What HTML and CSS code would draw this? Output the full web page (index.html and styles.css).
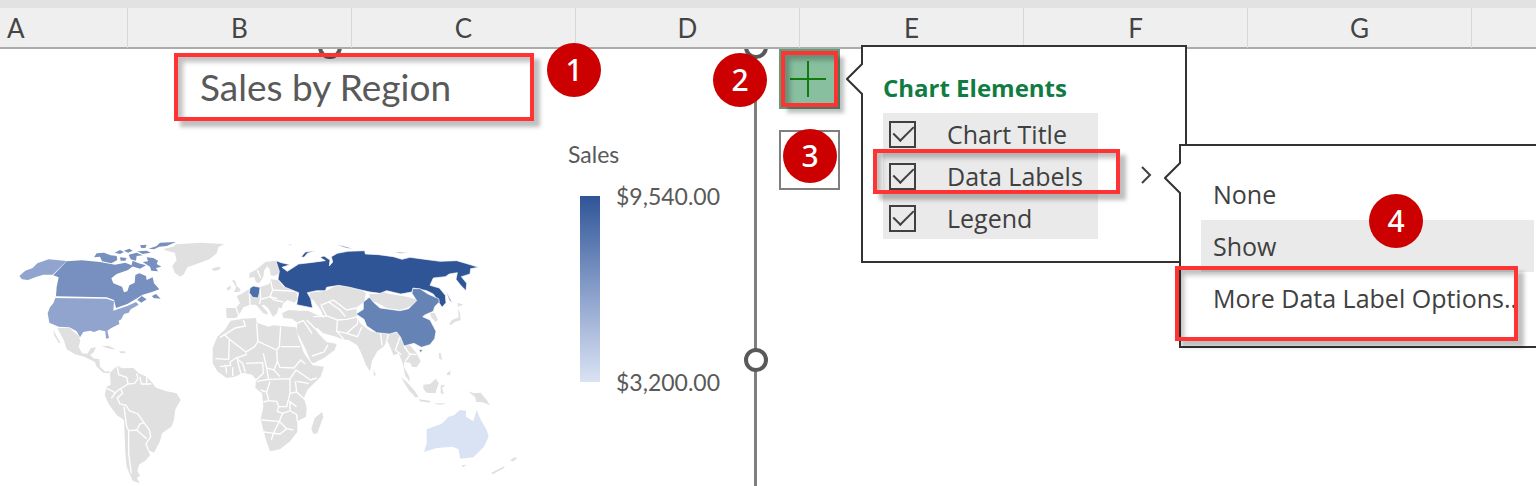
FILE: index.html
```
<!DOCTYPE html>
<html lang="en">
<head>
    <meta charset="UTF-8">
    <meta name="viewport" content="width=device-width, initial-scale=1.0">
    <title>Sales by Region</title>
    <link rel="stylesheet" href="styles.css">
</head>
<body>
    <header class="columns">
        <span>A</span>
        <span>B</span>
        <span>C</span>
        <span>D</span>
        <span>E</span>
        <span>F</span>
        <span>G</span>
        <span></span>
    </header>
    <main class="sheet">
        <section class="chart">
            <h1 class="mark chart-title">Sales by Region</h1>
            <div class="chart-body">
                <svg class="map" viewBox="0 0 1560 798" role="img" aria-label="World map">
                    <!-- Americas -->
                    <g class="land">
                        <path d="M490 87L520 80 528 73 600 68 672 72 655 82 650 100 628 118 590 132 562 142 552 162 541 170 524 158 517 138 530 120 524 98 500 92Z"/>
                        <path d="M636 146L655 140 662 146 645 152Z"/>
                        <path d="M172 324L208 323 236 348 241 362 236 380 246 400 262 401 272 385 288 382 280 398 270 404 280 415 298 418 300 440 316 455 330 453 326 460 310 458 290 440 284 425 252 410 225 403 200 388 192 362Z"/>
                        <path d="M160 330L168 345 182 370 176 368 162 345Z"/>
                        <path d="M305 379L325 377 348 388 332 387ZM358 394L375 394 376 400 360 399Z"/>
                        <path d="M330 458L352 437 366 445 400 444 416 460 440 470 458 490 468 503 500 514 530 520 542 540 526 568 522 600 514 620 486 640 480 664 462 698 444 690 450 706 436 722 418 733 412 752 420 768 410 774 420 790 398 782 388 760 380 740 376 700 372 600 350 585 326 552 314 525 320 500 332 494Z"/>
                        <path class="line" d="M352 440L356 464 380 472 384 492 362 506 368 520 352 534 360 552 378 556 388 572 414 582 432 608 448 630 452 650 438 672 446 692M384 492L404 490 414 476 410 460M420 470L424 492 454 492M320 505L346 518 334 535M346 518L360 506M372 560L376 590 380 620 386 632 410 630 420 612 432 608M410 630L440 656M386 632L386 700 394 760M440 466L440 490"/>
                    </g>
                    <g class="canada">
                        <path d="M200 124L245 121 300 126 345 134 376 128 400 138 384 150 350 162 334 175 340 190 366 200 372 217 382 214 388 196 404 188 406 165 418 160 438 168 440 180 458 172 462 190 478 208 456 216 428 224 406 238 382 252 348 264 342 240 320 232 168 229 170 200 176 172 160 166Z"/>
                        <path d="M282 112L290 100 312 98 332 106 350 108 352 120 334 130 306 124 300 110ZM360 112L380 114 376 122 362 122ZM398 122L416 130 438 136 420 146 394 138ZM386 104L410 98 428 106 410 108 408 122 392 118ZM440 112L460 114 474 122 470 132 484 140 468 144 474 154 454 152 450 140 428 126 444 124ZM344 98L360 90 372 96 360 102ZM420 76L440 74 436 84 424 84ZM446 86L470 78 480 68 528 66 500 78 478 80 462 88ZM372 92L388 86 398 92 384 98ZM412 94L440 92 452 98 428 102ZM412 240L425 228 440 238 424 248ZM456 228L468 222 482 236 460 234Z"/>
                    </g>
                    <g class="usa">
                        <path d="M58 168L76 152 98 144 112 130 146 118 200 123 158 164 130 164 110 170 84 180 66 178Z"/>
                        <path d="M166 234L320 236 342 244 340 272 382 258 408 246 416 254 392 268 386 278 372 282 364 298 356 302 358 312 334 324 322 332 327 354 318 356 316 334 298 330 282 336 270 332 250 336 240 352 230 334 208 322 176 320 148 308 143 280 150 262 160 250Z"/>
                    </g>
                    <!-- Europe, Africa, Asia and Oceania -->
                    <g transform="translate(600 0)">
                        <g class="land">
                            <path d="M36 146L62 140 56 150 40 152ZM80 204L92 196 92 208 82 212ZM96 180L106 182 110 198 122 208 118 216 102 216 108 202ZM148 160L170 148 196 126 226 122 238 140 240 160 222 168 212 166 210 150 202 138 192 152 190 170 178 190 168 186 162 170 148 174Z"/>
                            <path d="M110 228L128 220 142 210 178 202 208 192 212 178 234 180 248 198 290 218 292 236 284 248 262 240 250 250 244 266 236 262 230 282 218 290 206 266 192 254 184 256 202 276 204 284 190 280 168 254 150 254 130 262 120 280 108 294 80 294 78 264 108 264 120 250Z"/>
                            <path d="M246 280L266 270 300 272 324 272 350 284 372 294 362 270 340 240 326 236 330 218 380 212 410 196 470 202 498 220 492 246 470 262 470 286 480 310 510 332 542 342 568 340 590 338 604 352 612 376 630 376 650 400 662 424 650 442 636 440 630 428 612 426 612 442 628 470 630 486 616 468 608 430 596 400 580 406 572 384 562 364 550 380 532 394 516 422 510 454 498 436 484 400 472 376 446 360 426 358 408 350 370 340 352 324 344 326 360 346 380 366 410 372 404 390 372 414 340 430 332 424 318 390 290 334 292 308 276 296 250 294Z"/>
                            <path d="M92 302L130 296 168 294 170 308 206 320 220 316 244 318 288 322 296 356 312 400 338 436 372 440 362 470 322 510 312 534 320 564 318 590 292 604 292 636 270 664 240 688 210 694 198 660 190 630 182 598 190 560 186 520 166 504 168 478 156 464 130 458 104 470 80 474 52 454 38 430 38 384 52 350 74 330Z"/>
                            <path d="M366 576L370 590 352 640 340 642 334 626 344 594ZM520 450L528 464 522 468ZM508 222L540 222 544 214 570 222 620 230 654 240 646 252 620 264 600 270 560 264 530 248 510 240ZM690 280L704 278 714 300 706 306 694 292ZM748 312L756 300 776 292 774 266 780 278 782 300 764 306 752 316ZM772 248L790 254 774 260ZM602 470L620 486 644 512 656 532 646 532 626 510ZM670 494L690 492 708 476 716 490 706 520 680 518 670 506ZM656 538L690 542 690 548 660 544ZM722 496L736 494 726 504 732 522 722 520ZM716 400L722 398 726 420 718 416ZM742 458L752 452 750 466 740 464ZM804 514L822 520 842 518 860 540 870 556 846 546 828 546 826 532ZM942 712L952 714 940 724 930 722ZM872 760L890 750 914 738 912 744 880 762ZM700 550L740 550 720 554Z"/>
                            <path class="line" d="M130 300L136 318 106 324 74 344 60 352M74 344L88 358 86 418 46 416M88 358L138 396 164 380 174 364 170 310M138 396L138 404 108 414 90 426 92 436 60 440M174 364L230 390 238 380 242 320M230 390L232 424 222 450 200 444 190 400M242 380L300 380M108 414L128 430 136 456M138 430L188 428 190 460 168 480M232 424L240 442 282 444 302 420 316 432M200 444L206 478 170 484M206 478L270 476 288 450 332 480 350 474M222 450L240 470M270 476L270 520 260 560 236 560 230 544 206 542 200 516 182 510M200 516L210 484M286 484L290 516 270 520M290 516L316 540M290 484L326 490M190 546L206 542M184 600L238 604 248 580 270 572 290 584 292 604M238 604L220 640 192 636M238 604L260 626 240 642 220 640 214 660M260 626L280 630M248 580L232 574 236 560M270 572L270 545 290 560M98 442L98 468M76 434L80 460M112 420L124 466"/>
                            <path class="line" d="M180 206L182 238 210 230 222 240 250 246M212 182L218 210 286 214M218 210L210 230 232 236M148 212L150 256M182 238L178 252M108 264L116 284M172 150L182 174M340 290L380 288 412 300 410 334 432 358M412 300L440 298 474 290 472 312 440 340 412 334M362 256L386 246 420 270 436 290M380 288L364 258M386 246L400 240 440 270 470 264M336 340L310 302 290 310M320 300L346 326M440 340L472 350 486 320M336 408L372 396 384 374M542 342L546 376M566 340L558 370M600 352L586 390 604 404M612 378L630 404 616 424M630 402L650 404"/>
                        </g>
                        <path class="russia" d="M228 122L244 128 270 134 246 142 262 154 296 132 330 128 376 122 360 112 372 108 390 120 388 138 398 126 394 110 412 100 444 94 494 92 496 102 536 104 580 110 606 118 630 112 660 116 720 124 770 122 804 132 836 142 812 146 810 162 784 170 800 190 798 212 782 196 768 178 772 158 748 162 736 170 700 174 690 196 718 204 736 226 738 248 726 262 716 246 700 222 680 212 640 204 636 216 602 222 560 212 540 220 510 216 474 208 450 202 416 196 380 202 376 212 350 212 322 218 332 236 338 264 290 254 296 218 256 202 234 178 238 154ZM304 110L316 96 346 92 322 100 312 112ZM408 74L430 78 460 86 440 84ZM262 74L280 74 270 76ZM580 96L628 98 600 100ZM738 212L750 236 758 248 748 240Z"/>
                        <path class="china" d="M468 282L490 268 490 246 508 232 522 248 540 264 600 272 626 266 650 242 636 220 638 206 660 206 684 222 716 236 718 246 704 260 700 274 686 280 676 284 668 290 690 300 708 334 704 356 690 374 664 382 642 370 612 378 602 352 590 336 568 342 530 338 500 318 492 298ZM656 388L668 390 662 398Z"/>
                        <path class="germany" d="M150 204L160 198 180 202 178 220 174 234 158 232 148 218Z"/>
                        <path class="australia" d="M680 628L700 620 724 612 746 590 762 586 780 570 798 572 798 590 820 604 830 570 838 590 848 610 860 630 866 650 852 680 820 712 780 716 776 688 758 680 710 684 672 696 680 670ZM784 736L800 734 790 742Z"/>
                    </g>
                </svg>
                <div class="legend">
                    <h2>Sales</h2>
                    <div class="scale">
                        <div class="scale-bar"></div>
                        <div class="scale-labels">
                            <span>$9,540.00</span>
                            <span>$3,200.00</span>
                        </div>
                    </div>
                </div>
            </div>
            <span class="handle handle-top"></span>
            <span class="handle handle-corner"></span>
            <span class="handle handle-side"></span>
        </section>
        <div class="tools">
            <button class="tool tool-add" aria-label="Chart Elements">
                <svg width="36" height="36" viewBox="0 0 36 36"><path d="M18 0V36M0 18H36"/></svg>
                <span class="mark tool-mark"></span>
            </button>
            <button class="tool" aria-label="Chart Styles"></button>
        </div>
    </main>

    <form class="popup elements">
        <svg class="pointer" width="17" height="32" viewBox="0 0 17 32"><path d="M17 0L1 16 17 32"/></svg>
        <h2>Chart Elements</h2>
        <div class="options">
            <label><input type="checkbox" checked> Chart Title</label>
            <label><input type="checkbox" checked> Data Labels</label>
            <label><input type="checkbox" checked> Legend</label>
        </div>
        <button type="button" class="more" aria-label="Data Labels menu">
            <svg width="12" height="18" viewBox="0 0 12 18"><path d="M2 1L10 9 2 17"/></svg>
        </button>
        <span class="mark elements-mark"></span>
    </form>

    <div class="popup submenu">
        <svg class="pointer" width="17" height="32" viewBox="0 0 17 32"><path d="M17 0L1 16 17 32"/></svg>
        <button>None</button>
        <button class="active">Show</button>
        <button>More Data Label Options..</button>
        <span class="mark submenu-mark"></span>
    </div>

    <span class="step step-1">1</span>
    <span class="step step-2">2</span>
    <span class="step step-3">3</span>
    <span class="step step-4">4</span>
</body>
</html>
```
FILE: styles.css
```
* {
    margin: 0;
    box-sizing: border-box;
}
body {
    position: relative;
    min-height: 100vh;
    display: flex;
    flex-direction: column;
    overflow: hidden;
    background-color: #FFFFFF;
    color: #404040;
    font-family: "Open Sans", "Noto Sans", sans-serif;
}
button {
    font: inherit;
    color: inherit;
    border: 0;
    background: none;
    cursor: pointer;
}
/* column letters */
.columns {
    display: grid;
    grid-template-columns: 128px repeat(6, 224px) 1fr;
    height: 49px;
    border-top: 8px solid #E2E2E2;
    border-bottom: 2px solid #ABABAB;
    background-color: #EFEFEF;
    position: relative;
    z-index: 1;
}
.columns span {
    border-right: 1px solid #D8D8D8;
    text-align: center;
    font-family: Lato, sans-serif;
    font-size: 26px;
    line-height: 40px;
    color: #444444;
}
/* column A is scrolled partly out of view */
.columns span:first-child {
    padding-left: 7px;
    text-align: left;
}
.columns span:last-child {
    border-right: 0;
}
.sheet {
    flex: 1;
    display: flex;
}
/* chart */
.chart {
    width: 757px;
    border-right: 3px solid #7F7F7F;
    position: relative;
}
.mark {
    border: 4px solid #FF3333;
    box-shadow: 6px 6px 4px rgba(0, 0, 0, .25), inset 5px 5px 5px rgba(0, 0, 0, .25);
}
.chart-title {
    width: 360px;
    margin: 4px 0 0 174px;
    padding-left: 22px;
    font-family: Lato, sans-serif;
    font-size: 37px;
    font-weight: normal;
    line-height: 60px;
    color: #595959;
}
.chart-body {
    display: flex;
    gap: 48px;
}
.map {
    width: 520px;
    height: 266px;
    margin-top: 99px;
}
.land {
    fill: #E0E0E0;
}
.line {
    fill: none;
    stroke: #FFFFFF;
    stroke-width: 4;
}
.canada {
    fill: #7890BF;
}
.usa {
    fill: #90A4CD;
}
.russia {
    fill: #2F5597;
}
.china {
    fill: #6683B5;
}
.germany {
    fill: #4C70AC;
}
.australia {
    fill: #DAE3F3;
}
.russia, .china, .germany {
    stroke: #FFFFFF;
    stroke-width: 2;
}
.legend {
    margin-top: 19px;
    font-family: Lato, sans-serif;
    font-size: 23px;
    line-height: 28px;
    color: #595959;
}
.legend h2 {
    font-size: 23px;
    font-weight: normal;
}
.scale {
    display: flex;
    gap: 16px;
    padding-left: 12px;
    margin-top: 14px;
}
.scale-bar {
    width: 20px;
    height: 186px;
    margin-top: 14px;
    background: linear-gradient(#2F5597, #8FA4CE 55%, #DAE3F3);
}
.scale-labels {
    display: flex;
    flex-direction: column;
    justify-content: space-between;
    height: 214px;
}
.handle {
    width: 24px;
    height: 24px;
    border: 4px solid #595959;
    border-radius: 50%;
    background-color: #FFFFFF;
    position: absolute;
}
.handle-top {
    top: -14px;
    left: 318px;
    z-index: -1;
}
.handle-corner {
    top: -14px;
    right: -14px;
}
.handle-side {
    top: 299px;
    right: -14px;
}
/* buttons next to the chart */
.tools {
    display: flex;
    flex-direction: column;
    gap: 21px;
    margin-left: 22px;
}
.tool {
    width: 61px;
    height: 60px;
    padding: 0;
    border: 2px solid #7F7F7F;
    position: relative;
}
.tool-add {
    border-color: #5E9F78;
    background-color: #88BF9E;
}
.tool-add svg {
    display: block;
    margin: 0 9px;
    stroke: #107C10;
    stroke-width: 2;
}
.tool-mark {
    position: absolute;
    inset: 0;
}
/* popups */
.popup {
    position: absolute;
    z-index: 2;
    border: 2px solid #333333;
    background-color: #FFFFFF;
    font-size: 25px;
}
.pointer {
    position: absolute;
    top: 16px;
    left: -17px;
    fill: #FFFFFF;
    stroke: #333333;
    stroke-width: 2;
}
.elements {
    top: 45px;
    left: 861px;
    width: 326px;
    padding: 24px 20px 22px;
}
.elements h2 {
    font-size: 24px;
    line-height: 34px;
    margin-bottom: 8px;
    color: #107C41;
}
.options {
    width: 215px;
    background-color: #EAEAEA;
}
.options label {
    display: flex;
    align-items: center;
    gap: 31px;
    height: 42px;
    padding-left: 6px;
    white-space: nowrap;
}
.options input {
    appearance: none;
    width: 27px;
    height: 27px;
    border: 2px solid #404040;
    position: relative;
}
.options input:checked::before {
    content: '';
    position: absolute;
    top: -2px;
    left: 7px;
    width: 9px;
    height: 18px;
    border-right: 2px solid #404040;
    border-bottom: 2px solid #404040;
    transform: rotate(45deg);
}
.more {
    position: absolute;
    top: 119px;
    right: 33px;
    padding: 0;
}
.more svg {
    display: block;
    fill: none;
    stroke: #404040;
    stroke-width: 2;
}
.elements-mark {
    position: absolute;
    top: 102px;
    left: 10px;
    width: 247px;
    height: 45px;
}
.submenu {
    top: 144px;
    left: 1179px;
    right: 0;
    display: flex;
    flex-direction: column;
    padding: 22px 2px 22px 20px;
    border-right: 0;
}
.submenu button {
    height: 52px;
    padding: 0 12px;
    text-align: left;
    white-space: nowrap;
}
.submenu .active {
    background-color: #EAEAEA;
}
.submenu-mark {
    position: absolute;
    top: 120px;
    left: -6px;
    right: 18px;
    height: 75px;
}
/* numbered steps */
.step {
    position: absolute;
    z-index: 3;
    width: 54px;
    height: 54px;
    border-radius: 50%;
    background-color: #CC0000;
    color: #FFFFFF;
    font-family: "Noto Sans", sans-serif;
    font-size: 30px;
    font-weight: 500;
    line-height: 54px;
    text-align: center;
}
.step-1 {
    top: 43px;
    left: 547px;
}
.step-2 {
    top: 53px;
    left: 713px;
}
.step-3 {
    top: 129px;
    left: 783px;
}
.step-4 {
    top: 194px;
    left: 1369px;
}
```
